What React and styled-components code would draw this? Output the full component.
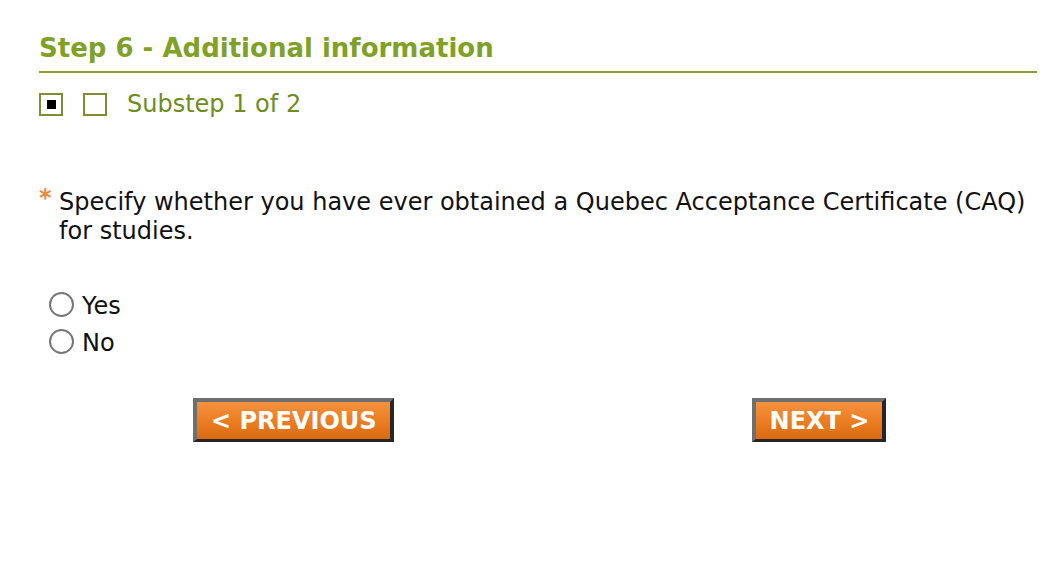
import React from "react";
import styled, { createGlobalStyle } from "styled-components";

const Global = createGlobalStyle`
  html, body { margin: 0; padding: 0; background: #ffffff; }
  body { font-family: "DejaVu Sans", Verdana, sans-serif; color: #111; }
`;

const Page = styled.div`
  width: 998px;
  padding: 0 0 0 39px;
`;

const Heading = styled.h2`
  margin: 0;
  padding-top: 32px;
  font-size: 26px;
  line-height: 33px;
  font-weight: bold;
  color: #7fa128;
  padding-bottom: 6px;
  border-bottom: 2px solid #8a9c35;
`;

const SubstepRow = styled.div`
  display: flex;
  align-items: center;
  margin-top: 19px;
  height: 24px;
`;

const Box = styled.span`
  box-sizing: border-box;
  width: 24px;
  height: 23px;
  border: 2px solid #7c8f30;
  background: #fff;
  display: flex;
  align-items: center;
  justify-content: center;
  margin-right: 20px;
  &::after {
    content: "";
    display: ${(p) => (p.$active ? "block" : "none")};
    width: 9px;
    height: 9px;
    background: #000;
  }
`;

const SubstepText = styled.span`
  font-size: 24px;
  color: #6d8d1d;
`;

const Question = styled.div`
  display: flex;
  margin-top: 72px;
  font-size: 24px;
  line-height: 29px;
  color: #111;
`;

const Star = styled.span`
  color: #ee8a3c;
  font-size: 24px;
  line-height: 20px;
  width: 20px;
  flex: none;
  font-weight: bold;
`;

const Options = styled.div`
  margin-top: 47px;
  margin-left: 10px;
  display: flex;
  flex-direction: column;
  gap: 12px;
`;

const Option = styled.label`
  display: flex;
  align-items: center;
  font-size: 24px;
  height: 25px;
  color: #111;
`;

const Circle = styled.span`
  box-sizing: border-box;
  width: 25px;
  height: 25px;
  border-radius: 50%;
  border: 2px solid #777;
  background: #fff;
  margin-right: 8px;
  margin-top: -3px;
`;

const Buttons = styled.div`
  display: flex;
  margin-top: 43px;
  padding-left: 154px;
  gap: 358px;
`;

const Btn = styled.button`
  box-sizing: border-box;
  height: 44px;
  padding: 0 13px 0 14px;
  border-style: solid;
  border-width: 4px 4px 3px 4px;
  border-color: #6f6f6f #262626 #262626 #6f6f6f;
  background: linear-gradient(#f5923e 0%, #ec7e24 50%, #d96a0f 100%);
  color: #fff;
  font-family: "DejaVu Sans", Verdana, sans-serif;
  font-weight: bold;
  font-size: 24px;
  line-height: 30px;
  cursor: pointer;
`;

export default function App() {
  return (
    <Page>
      <Global />
      <Heading>Step 6 - Additional information</Heading>
      <SubstepRow>
        <Box $active />
        <Box />
        <SubstepText>Substep 1 of 2</SubstepText>
      </SubstepRow>
      <Question>
        <Star>*</Star>
        <span>
          Specify whether you have ever obtained a Quebec Acceptance Certificate (CAQ)
          <br />
          for studies.
        </span>
      </Question>
      <Options>
        <Option>
          <Circle />
          Yes
        </Option>
        <Option>
          <Circle />
          No
        </Option>
      </Options>
      <Buttons>
        <Btn>&lt; PREVIOUS</Btn>
        <Btn>NEXT &gt;</Btn>
      </Buttons>
    </Page>
  );
}
